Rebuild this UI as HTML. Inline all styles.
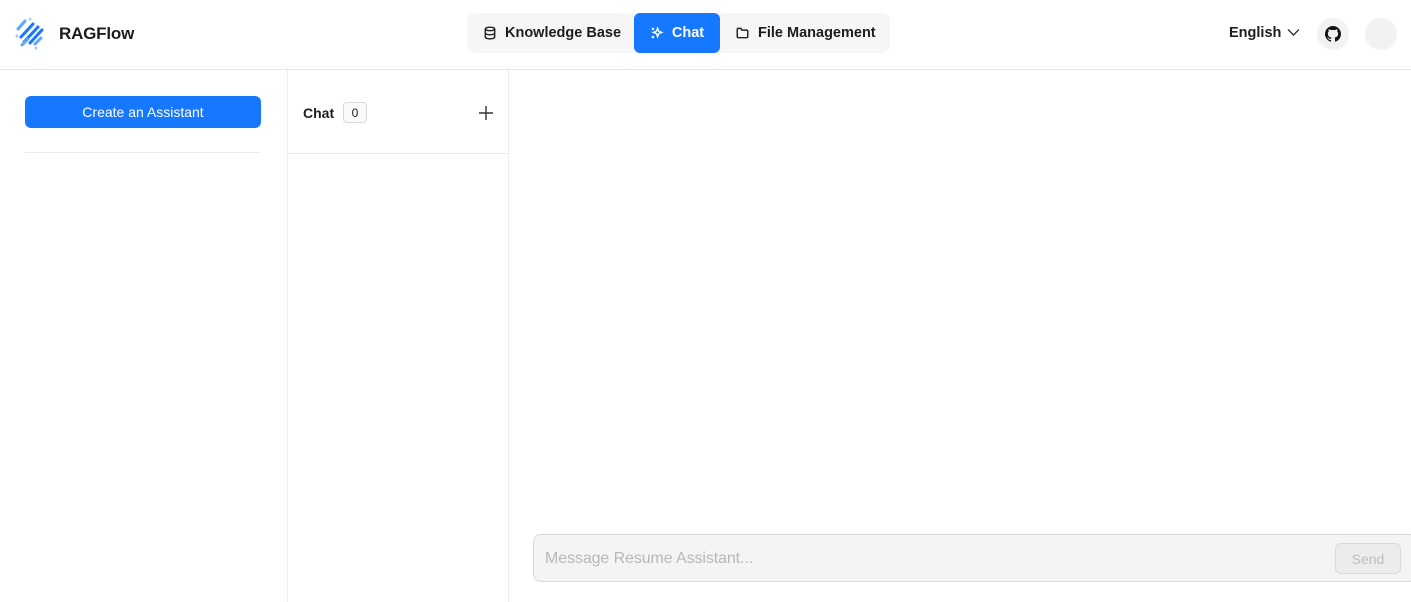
<!DOCTYPE html>
<html><head><meta charset="utf-8"><style>
*{box-sizing:border-box;margin:0;padding:0}
body{width:1411px;height:602px;overflow:hidden;background:#fff;font-family:"Liberation Sans",sans-serif;color:#1d1d1d;position:relative}
.hdr{position:absolute;left:0;top:0;width:1411px;height:70px;border-bottom:1px solid #e5e5e5}
.abs{position:absolute}
.nav{left:467px;top:13px;width:423px;height:40px;background:#f6f6f7;border-radius:8px}
.tab{position:absolute;top:0;height:40px;display:flex;align-items:center;font-weight:bold;font-size:14.5px;gap:8px}
.chatTab{left:167px;width:86px;background:#1677ff;color:#fff;border-radius:6px;justify-content:center}
</style></head><body>
<div class="hdr">
 <svg class="abs" style="left:14px;top:16px" width="34" height="34" viewBox="0 0 34 34">
  <g stroke-linecap="round" stroke-width="3">
   <line x1="4" y1="13" x2="11" y2="5" stroke="#5aa8ff"/>
   <line x1="7" y1="21" x2="19" y2="8" stroke="#1677ff"/>
   <line x1="10" y1="26" x2="24" y2="11" stroke="#1677ff"/>
   <line x1="16" y1="27" x2="28" y2="14" stroke="#1677ff"/>
   <line x1="21" y1="28" x2="27" y2="22" stroke="#5aa8ff"/>
   <line x1="8" y1="29" x2="14" y2="23" stroke="#5aa8ff"/>
  </g>
  <circle cx="3" cy="20" r="1.5" fill="#9ccaff"/><circle cx="22" cy="32" r="1.5" fill="#9ccaff"/><circle cx="16" cy="3" r="1.4" fill="#9ccaff"/>
 </svg>
 <div class="abs" style="left:59px;top:24px;font-size:17px;font-weight:bold;letter-spacing:-0.2px">RAGFlow</div>
 <div class="abs nav">
  <div class="tab" style="left:16px"><svg width="14" height="14" viewBox="0 0 24 24" fill="none" stroke="#222" stroke-width="2.5"><ellipse cx="12" cy="5" rx="8" ry="3"/><path d="M4 5v14c0 1.7 3.6 3 8 3s8-1.3 8-3V5M4 12c0 1.7 3.6 3 8 3s8-1.3 8-3"/></svg>Knowledge Base</div>
  <div class="tab chatTab"><svg width="14" height="14" viewBox="0 0 24 24" fill="none" stroke="#fff" stroke-width="2.5"><path d="M13 4l2 5 5 2-5 2-2 5-2-5-5-2 5-2z"/><path d="M5 3v4M3 5h4M5 17v4M3 19h4"/></svg>Chat</div>
  <div class="tab" style="left:268px"><svg width="15" height="14" viewBox="0 0 24 24" fill="none" stroke="#222" stroke-width="2.5"><path d="M3 6a2 2 0 0 1 2-2h4l2 3h8a2 2 0 0 1 2 2v9a2 2 0 0 1-2 2H5a2 2 0 0 1-2-2z"/></svg>File Management</div>
 </div>
 <div class="abs" style="left:1229px;top:25px;font-size:14.5px;font-weight:bold">English</div>
 <svg class="abs" style="left:1287px;top:28px" width="13" height="9" viewBox="0 0 13 9"><path d="M1 1.5l5.5 5.5 5.5-5.5" fill="none" stroke="#333" stroke-width="1.4"/></svg>
 <div class="abs" style="left:1317px;top:18px;width:32px;height:32px;border-radius:50%;background:#f2f2f3"></div>
 <svg class="abs" style="left:1325px;top:26px" width="16" height="16" viewBox="0 0 16 16"><path fill="#111" d="M8 0C3.58 0 0 3.58 0 8c0 3.54 2.290 6.53 5.47 7.59.4.07.55-.17.55-.38v-1.330c-2.23.48-2.7-1.07-2.7-1.070-.36-.92-.89-1.170-.89-1.170-.73-.5.05-.49.05-.49.8.06 1.23.83 1.23.83.71 1.22 1.87.87 2.33.66.07-.52.28-.87.51-1.07-1.78-.2-3.65-.89-3.65-3.950 0-.87.31-1.59.82-2.15-.08-.2-.36-1.02.08-2.12 0 0 .67-.21 2.2.82a7.6 7.6 0 0 1 4 0c1.53-1.04 2.2-.82 2.2-.82.44 1.1.16 1.92.08 2.12.51.56.82 1.27.82 2.15 0 3.07-1.87 3.75-3.65 3.95.29.25.54.73.54 1.48v2.2c0 .21.15.46.55.38A8.01 8.01 0 0 0 16 8c0-4.42-3.58-8-8-8z"/></svg>
 <div class="abs" style="left:1365px;top:18px;width:32px;height:32px;border-radius:50%;background:#f2f2f3"></div>
</div>
<div class="abs" style="left:287px;top:70px;width:1px;height:532px;background:#ececec"></div>
<div class="abs" style="left:508px;top:70px;width:1px;height:532px;background:#ececec"></div>
<div class="abs" style="left:25px;top:96px;width:236px;height:32px;background:#1677ff;border-radius:6px;color:#fff;font-size:14px;display:flex;align-items:center;justify-content:center">Create an Assistant</div>
<div class="abs" style="left:25px;top:152px;width:236px;height:1px;background:#ececec"></div>
<div class="abs" style="left:303px;top:105px;font-size:14px;font-weight:bold">Chat</div>
<div class="abs" style="left:343px;top:102px;width:24px;height:21px;border:1px solid #d9d9d9;border-radius:4px;background:#fafafa;font-size:12px;display:flex;align-items:center;justify-content:center">0</div>
<svg class="abs" style="left:479px;top:106px" width="14" height="14" viewBox="0 0 14 14"><path d="M7 0v14M0 7h14" stroke="#333" stroke-width="1.4"/></svg>
<div class="abs" style="left:288px;top:153px;width:220px;height:1px;background:#ececec"></div>
<div class="abs" style="left:533px;top:534px;width:885px;height:48px;background:#f4f4f4;border:1px solid #d9d9d9;border-radius:8px"></div>
<div class="abs" style="left:545px;top:550px;font-size:16px;color:#b8b8b8;letter-spacing:-0.1px">Message Resume Assistant...</div>
<div class="abs" style="left:1335px;top:543px;width:66px;height:31px;background:#ececec;border:1px solid #d9d9d9;border-radius:6px;color:#bdbdbd;font-size:14px;display:flex;align-items:center;justify-content:center">Send</div>
</body></html>
